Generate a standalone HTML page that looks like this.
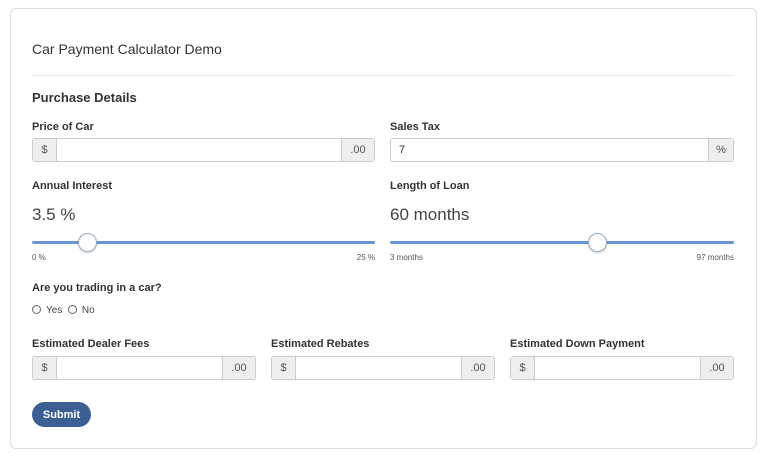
<!DOCTYPE html>
<html><head><style>
*{box-sizing:border-box;margin:0;padding:0}
body{width:768px;height:461px;background:#fff;font-family:"Liberation Sans",sans-serif;color:#333;position:relative;overflow:hidden}
.card{position:absolute;left:10px;top:8px;width:747px;height:441px;border:1px solid #ddd;border-radius:6px}
.a{position:absolute}
.lbl{font-size:11px;font-weight:bold;color:#333}
.grp{position:absolute;height:24px;border:1px solid #ccc;border-radius:3px;display:flex;font-size:11px;color:#555;background:#fff}
.ad{background:#eee;display:flex;align-items:center;justify-content:center}
.track{position:absolute;height:3px;background:#6a95d4;border-radius:2px}
.thumb{position:absolute;width:19px;height:19px;border-radius:50%;background:#fff;border:1px solid #9ab;box-shadow:0 1px 2px rgba(0,0,0,.2)}
.sm{font-size:8px;color:#555}
.rad{display:inline-block;width:9px;height:9px;border:1px solid #666;border-radius:50%;vertical-align:-1px;margin-right:5px}
</style></head><body>
<div class="card"></div>
<div class="a" style="left:32px;top:41px;font-size:14px;color:#333">Car Payment Calculator Demo</div>
<div class="a" style="left:32px;top:75px;width:702px;height:1px;background:#e6e6e6"></div>
<div class="a" style="left:32px;top:90px;font-size:13px;font-weight:bold">Purchase Details</div>

<div class="a lbl" style="left:32px;top:121px">Price of Car</div>
<div class="grp" style="left:32px;top:138px;width:343px"><div class="ad" style="width:24px;border-right:1px solid #ccc">$</div><div style="flex:1"></div><div class="ad" style="width:33px;border-left:1px solid #ccc">.00</div></div>
<div class="a lbl" style="left:390px;top:121px">Sales Tax</div>
<div class="grp" style="left:390px;top:138px;width:344px"><div style="flex:1;padding-left:8px;display:flex;align-items:center;color:#333">7</div><div class="ad" style="width:25px;border-left:1px solid #ccc">%</div></div>

<div class="a lbl" style="left:32px;top:180px">Annual Interest</div>
<div class="a" style="left:32px;top:205px;font-size:17px;color:#444">3.5 %</div>
<div class="track" style="left:32px;top:241px;width:343px"></div>
<div class="thumb" style="left:78px;top:233px"></div>
<div class="a sm" style="left:32px;top:253px">0 %</div>
<div class="a sm" style="right:393px;top:253px">25 %</div>

<div class="a lbl" style="left:390px;top:180px">Length of Loan</div>
<div class="a" style="left:390px;top:205px;font-size:17px;color:#444">60 months</div>
<div class="track" style="left:390px;top:241px;width:344px"></div>
<div class="thumb" style="left:588px;top:233px"></div>
<div class="a sm" style="left:390px;top:253px">3 months</div>
<div class="a sm" style="right:34px;top:253px">97 months</div>

<div class="a lbl" style="left:32px;top:282px">Are you trading in a car?</div>
<div class="a" style="left:32px;top:305px;font-size:10px;color:#444"><span class="rad"></span>Yes &nbsp;<span class="rad"></span>No</div>

<div class="a lbl" style="left:32px;top:338px">Estimated Dealer Fees</div>
<div class="grp" style="left:32px;top:356px;width:224px"><div class="ad" style="width:24px;border-right:1px solid #ccc">$</div><div style="flex:1"></div><div class="ad" style="width:33px;border-left:1px solid #ccc">.00</div></div>
<div class="a lbl" style="left:271px;top:338px">Estimated Rebates</div>
<div class="grp" style="left:271px;top:356px;width:224px"><div class="ad" style="width:24px;border-right:1px solid #ccc">$</div><div style="flex:1"></div><div class="ad" style="width:33px;border-left:1px solid #ccc">.00</div></div>
<div class="a lbl" style="left:510px;top:338px">Estimated Down Payment</div>
<div class="grp" style="left:510px;top:356px;width:224px"><div class="ad" style="width:24px;border-right:1px solid #ccc">$</div><div style="flex:1"></div><div class="ad" style="width:33px;border-left:1px solid #ccc">.00</div></div>

<div class="a" style="left:32px;top:402px;width:59px;height:25px;border-radius:13px;background:#3b5e93;color:#fff;font-size:11px;font-weight:bold;display:flex;align-items:center;justify-content:center">Submit</div>
</body></html>
